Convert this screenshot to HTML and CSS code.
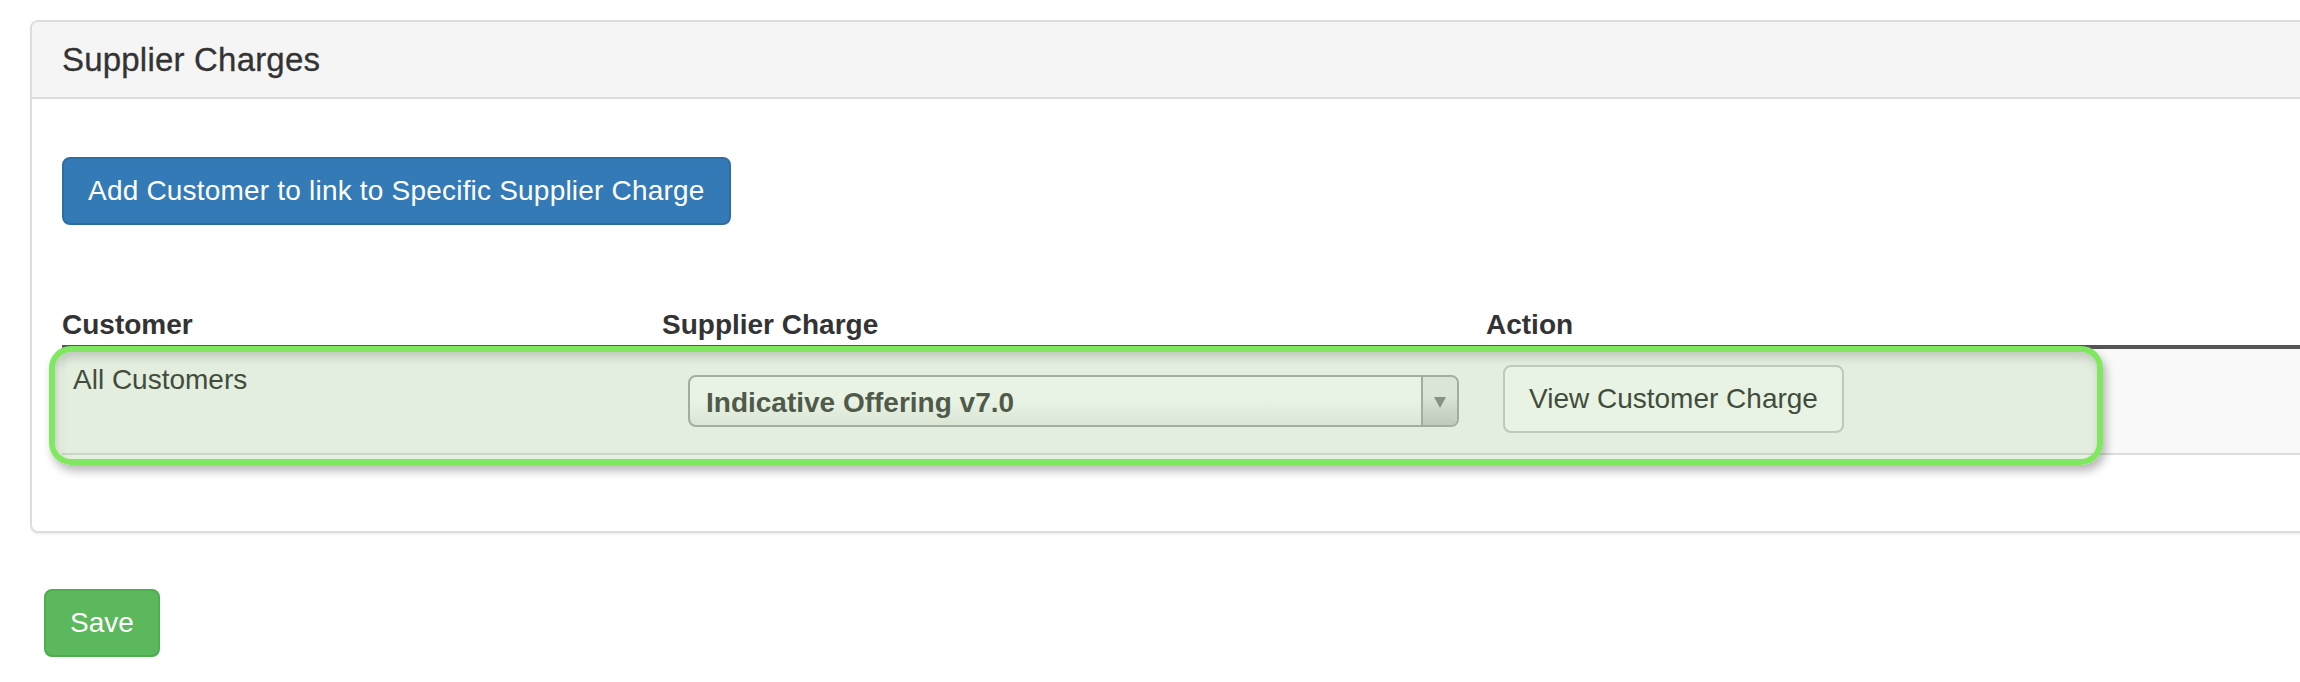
FILE: index.html
```html
<!DOCTYPE html>
<html lang="en">
<head>
<meta charset="utf-8">
<title>Supplier Charges</title>
<link rel="stylesheet" href="styles.css">
</head>
<body>
<div class="page">
  <div class="panel">
    <div class="panel-heading">
      <h3 class="panel-title">Supplier Charges</h3>
    </div>
    <div class="panel-body">
      <div class="toolbar">
        <button class="btn btn-primary" type="button">Add Customer to link to Specific Supplier Charge</button>
      </div>
      <div class="table-wrap">
        <table class="charges">
          <colgroup>
            <col class="col-customer">
            <col class="col-charge">
            <col class="col-action">
          </colgroup>
          <thead>
            <tr><th>Customer</th><th>Supplier Charge</th><th>Action</th></tr>
          </thead>
          <tbody>
            <tr>
              <td class="cell-customer">All Customers</td>
              <td class="cell-charge">
                <div class="select2">
                  <span class="select2-chosen">Indicative Offering v7.0</span>
                  <span class="select2-arrow"><b></b></span>
                </div>
              </td>
              <td class="cell-action">
                <button class="btn btn-default" type="button">View Customer Charge</button>
              </td>
            </tr>
          </tbody>
        </table>
        <div class="highlight"></div>
      </div>
    </div>
  </div>
  <div class="form-actions">
    <button class="btn btn-success" type="button">Save</button>
  </div>
</div>
</body>
</html>
```
FILE: styles.css
```css
html, body {
  overflow: hidden;
}
body {
  margin: 0;
  background: #fff;
  font-family: "Liberation Sans", Arial, Helvetica, sans-serif;
  font-size: 28px;
  line-height: 40px;
  color: #333;
}
.page {
  padding: 20px 0 0 30px;
}
.panel {
  width: 2400px;
  border: 2px solid #ddd;
  border-radius: 8px;
  background: #fff;
  box-shadow: 0 2px 2px rgba(0, 0, 0, 0.05);
}
.panel-heading {
  padding: 20px 30px;
  background: #f5f5f5;
  border-bottom: 2px solid #ddd;
  border-radius: 6px 6px 0 0;
}
.panel-title {
  margin: 0;
  font-size: 33px;
  line-height: 35px;
  letter-spacing: 0.2px;
  font-weight: normal;
  color: #333;
  -webkit-text-stroke: 0.3px #333;
}
.panel-body {
  padding: 30px;
}
.toolbar {
  padding-top: 28px;
  margin-bottom: 80px;
}
.btn {
  display: inline-block;
  margin: 0;
  padding: 12px 24px;
  font-family: inherit;
  font-size: 28px;
  line-height: 40px;
  font-weight: normal;
  border: 2px solid transparent;
  border-radius: 8px;
  cursor: pointer;
  white-space: nowrap;
}
.btn-primary {
  color: #fff;
  background: #337ab7;
  border-color: #2e6da4;
  letter-spacing: 0.2px;
}
.btn-default {
  color: #333;
  background: #fff;
  border-color: #ccc;
}
.btn-success {
  color: #fff;
  background: #5cb85c;
  border-color: #4cae4c;
}
.table-wrap {
  position: relative;
  margin-bottom: 46px;
}
.charges {
  width: 100%;
  table-layout: fixed;
  border-collapse: separate;
  border-spacing: 0;
}
.col-customer { width: 600px; }
.col-charge { width: 824px; }
.charges th {
  padding: 0;
  text-align: left;
  font-weight: bold;
  line-height: 40px;
  vertical-align: bottom;
  border-bottom: 4px solid #555;
}
.charges tbody tr {
  height: 106px;
}
.charges td {
  vertical-align: top;
  background: #f9f9f9;
  border-bottom: 2px solid #ddd;
  padding: 0;
}
.charges td.cell-customer {
  padding: 11px 11px 0 11px;
}
.charges td.cell-charge {
  padding: 26px 0 0 26px;
}
.charges td.cell-action {
  padding: 16px 0 0 17px;
}
.select2 {
  display: flex;
  width: 771px;
  height: 52px;
  box-sizing: border-box;
  border: 2px solid #aaa;
  border-radius: 8px;
  background: linear-gradient(to top, #eee 0%, #fff 50%);
  overflow: hidden;
}
.select2-chosen {
  flex: 1;
  padding: 4px 0 0 16px;
  line-height: 44px;
  font-weight: bold;
  color: #444;
  white-space: nowrap;
}
.select2-arrow {
  display: flex;
  align-items: center;
  justify-content: center;
  width: 36px;
  box-sizing: border-box;
  border-left: 2px solid #aaa;
  background: linear-gradient(to top, #ccc 0%, #eee 60%);
}
.select2-arrow b {
  display: block;
  width: 0;
  height: 0;
  margin-top: 3px;
  border-left: 6px solid transparent;
  border-right: 6px solid transparent;
  border-top: 11px solid #888;
}
.highlight {
  position: absolute;
  top: 41px;
  left: -13px;
  width: 2054px;
  height: 119px;
  box-sizing: border-box;
  border: 6px solid #80e860;
  border-radius: 22px;
  background: rgba(130, 190, 109, 0.185);
  box-shadow: 3px 6px 10px rgba(0, 0, 0, 0.28), inset 2px 5px 10px rgba(0, 0, 0, 0.16);
  pointer-events: none;
}
.form-actions {
  margin-top: 56px;
  padding-left: 14px;
}
```
